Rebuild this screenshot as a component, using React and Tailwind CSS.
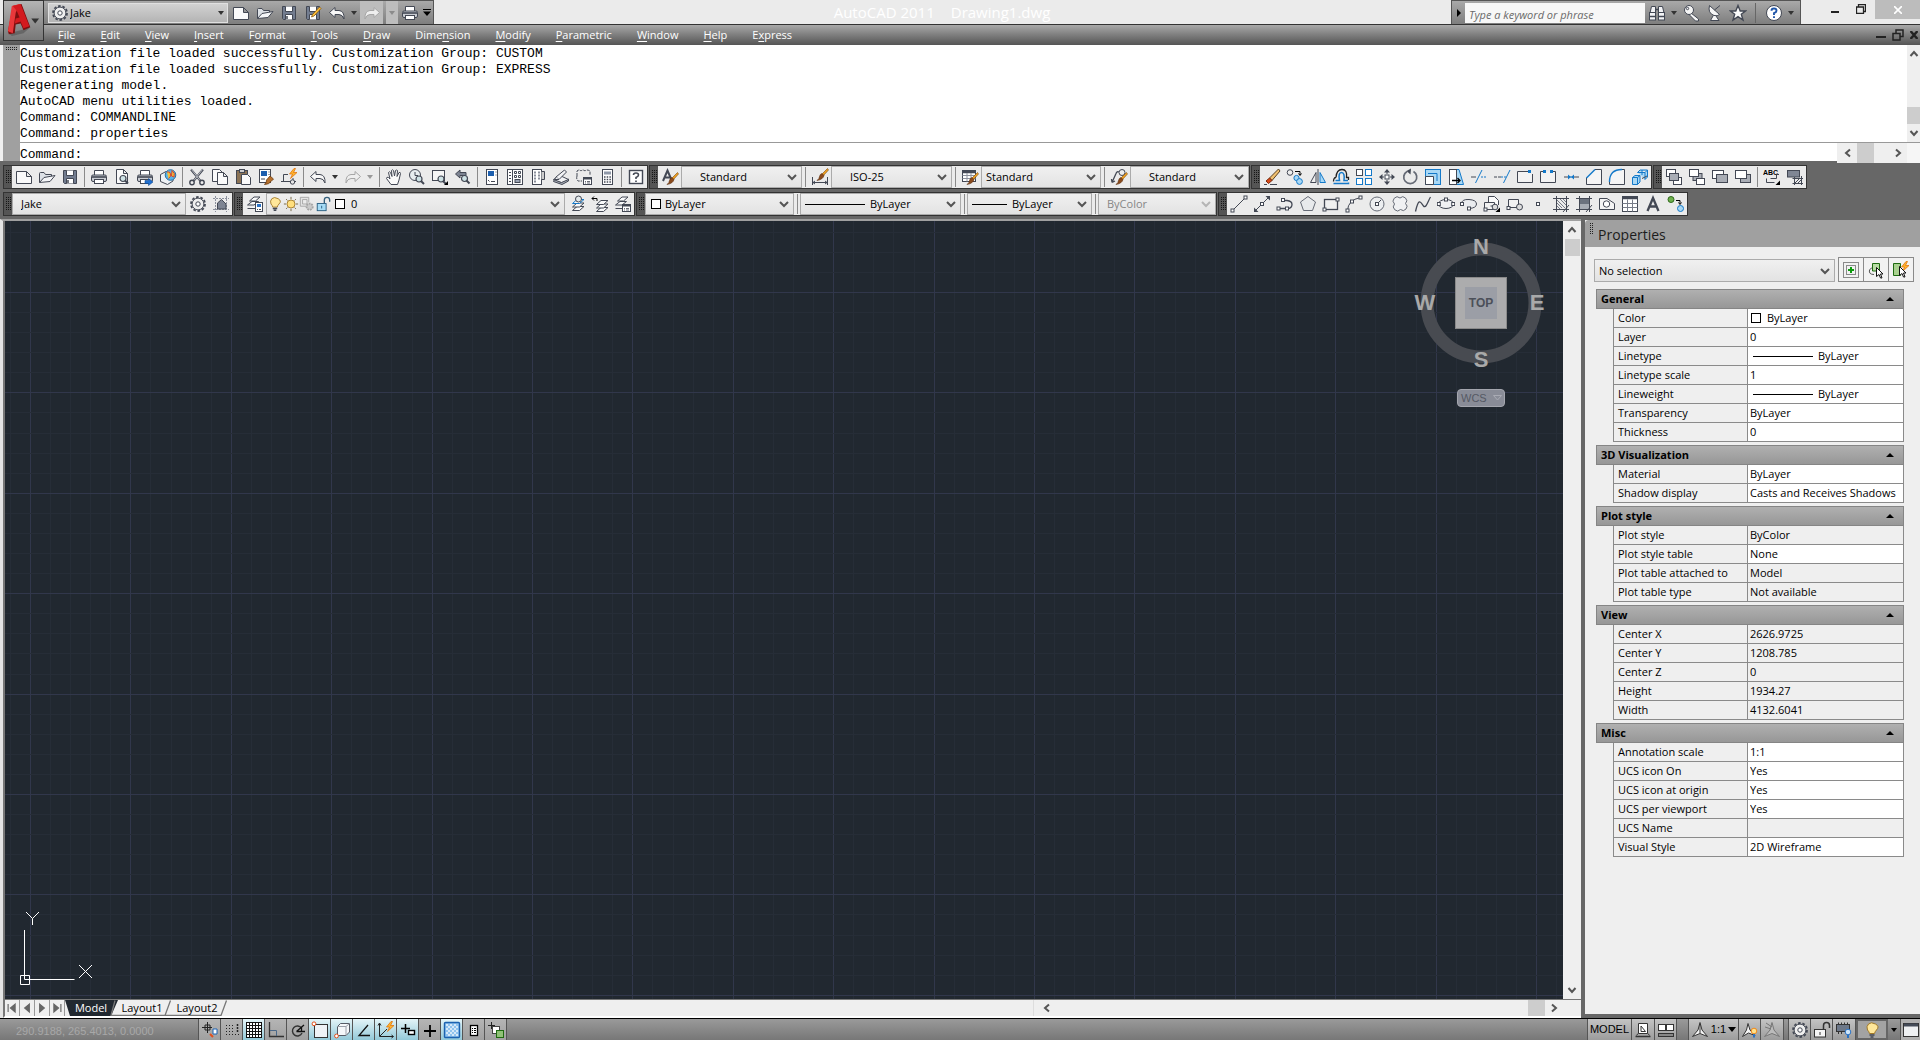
import React from 'react';

const INK = '#434854';
const BLUE = '#1479c9';
const SKY = '#a9d8f5';

/* Small brush laid over style icons */
const brush = (
  <g stroke="none">
    <path d="M16.5 4.5 L17.5 6 L12.5 11.5 L11 10 Z" fill="#f0a020" stroke="#7a4a10" strokeWidth=".6" />
    <path d="M11 9.5 L13 11.5 Q12 15.5 6 16.5 Q8.5 14.5 8.5 12.5 Q9 10 11 9.5Z" fill="#8a4a1c" stroke="#5a2c0c" strokeWidth=".6" />
  </g>
);
const lens = (x, y) => (
  <g>
    <circle cx={x} cy={y} r="3" fill="#cfe3e6" strokeWidth="1.2" />
    <path d={`M${x + 2} ${y + 2}l3 3`} strokeWidth="2" />
  </g>
);
const spark = <path d="M14 .5L9.5 6H12.5L10.5 10.5L17 4.5H13.5L15.5 .5Z" fill="#ffb52e" stroke="#e06a00" strokeWidth=".7" />;
const knob = (x, y) => <rect x={x - 1.5} y={y - 1.5} width="3" height="3" fill="#fff" />;
const layers = (c) => (
  <g fill="#f8f9fa">
    <path d="M4.5 15.5H11.5L16 11.5H9Z" />
    <path d="M4.5 12H11.5L16 8H9Z" />
    <path d="M4.5 8.5H11.5L16 4.5H9Z" stroke={c} />
  </g>
);
const list = (
  <g>
    <rect x="8.5" y="9.5" width="8" height="7" fill="#fff" />
    <path d="M8.5 10.5H16.5" strokeWidth="2" />
    <path d="M10 13.5h1M12 13.5h3M10 15h1M12 15h3" strokeWidth=".8" />
  </g>
);
const gear = (
  <g>
    <circle cx="9" cy="9" r="7" strokeWidth="1.8" strokeDasharray="2.6 1.8" />
    <circle cx="9" cy="9" r="5.9" fill="#efefef" strokeWidth="1" />
    <circle cx="9" cy="9" r="2.2" fill="#fff" />
  </g>
);
const printer = (
  <g>
    <path d="M4.5 7V2.5H13.5V7" fill="#fff" />
    <rect x="1.5" y="7" width="15" height="6.5" rx="1.5" fill="#c9ccd2" />
    <path d="M2 9h14" strokeWidth="1.6" />
    <rect x="4.5" y="11.5" width="9" height="4" fill="#fff" />
  </g>
);
const hatchFrame = <path d="M4.5 1V17M14.5 1V17M1 3.5H17M1 14.5H17" />;
const stackSheets = (
  <g fill="#f8f9fa">
    <path d="M1.5 13.5H9L12 10.5" />
    <path d="M1.5 10H8L12.5 6.500H6Z" />
    <path d="M3.5 6H9.5L14 2H8Z" />
  </g>
);
const chevDown = 'M5 7L9 11L13 7';

const ICONS = {
  new: <path d="M1.5 3.5H11.5L16.5 8.5V15.5H1.5ZM11.5 3.5V8.5H16.5" fill="#fafafa" />,
  open: (
    <g>
      <path d="M1.5 14.5V5.5Q1.5 4.5 2.5 4.5H6L7.5 6.5H13.5V9" fill="#dde1e6" />
      <path d="M1.5 14.5L6 9.5L17 7.5L12 13.5Z" fill="#f4f5f7" />
    </g>
  ),
  save: (
    <g>
      <path d="M2.5 2.5H15.5V15.5H3.5L2.5 14.5Z" fill="#737d90" />
      <path d="M5.5 2.5V7.5H12.5V2.5M5.5 15.5V10.5H12.5V15.5" fill="#fff" />
      <path d="M7 12v3" strokeWidth="1.5" />
    </g>
  ),
  saveas: (
    <g>
      <path d="M2.5 2.5H15.5V15.5H3.5L2.5 14.5Z" fill="#737d90" />
      <path d="M5.5 2.5V7.5H12.5V2.5M5.5 15.5V10.5H12.5V15.5" fill="#fff" />
      <path d="M15.5 3L17 4.5L10 12L7.5 13L8.5 10.5Z" fill="#ffc23c" stroke="#8a5a10" strokeWidth=".8" />
    </g>
  ),
  print: printer,
  preview: (
    <g>
      <path d="M3.5 1.5H10.5L14.5 5.5V15.5H3.5ZM10.5 1.5V5.5H14.5" fill="#fafafa" />
      {lens(10, 10.5)}
    </g>
  ),
  publish: (
    <g>
      {printer}
      <path d="M9 12.5H12.5V10.5L17 14L12.5 17.5V15.5H9Z" fill="#1f6fd0" stroke="#0f4a94" strokeWidth=".6" />
    </g>
  ),
  globe: (
    <g>
      <path d="M1.5 6.5L7 3.5L14 6V13L8.5 16.5L1.5 13.5Z" fill="#eef1f4" />
      <circle cx="11.5" cy="7" r="5.3" fill="#58b4e8" stroke="#2a6fa0" />
      <path d="M8 4Q11 3 11.5 6T9.5 10.5M13 2.5Q16.5 5 15 9L12.5 8Z" fill="#f3c53c" stroke="#d6452c" />
    </g>
  ),
  cut: (
    <g>
      <path d="M3 1.5L12.5 13M15 1.5L5.5 13" strokeWidth="2" />
      <path d="M3.5 1.5L12 12.5M14.5 1.5L6 12.5" stroke="#e9edf2" strokeWidth=".7" />
      <circle cx="4" cy="14.5" r="2.2" fill="#eee" strokeWidth="1.4" />
      <circle cx="14" cy="14.5" r="2.2" fill="#eee" strokeWidth="1.4" />
    </g>
  ),
  copy: (
    <g fill="#fafafa">
      <path d="M1.5 1.5H8.5L11.5 4.5V13.5H1.5Z" />
      <path d="M6.5 4.5H12.5L16.5 8.5V16.5H6.5ZM12.5 4.5V8.5H16.5" />
    </g>
  ),
  paste: (
    <g>
      <rect x="2.5" y="2.5" width="11" height="13" fill="#8b7355" />
      <rect x="5.5" y="1.5" width="5" height="3" fill="#ccc" />
      <path d="M7.5 6.5H13.5L16.5 9.5V16.5H7.5Z" fill="#fafafa" />
    </g>
  ),
  match: (
    <g>
      <rect x="2.5" y="1.5" width="11" height="13" fill="#fff" />
      <rect x="4" y="3" width="6" height="5" fill="#1d5fae" stroke="none" />
      <path d="M11.5 4h1M11.5 6.5h1M4 11h4" />
      <path d="M13 8L16.5 11L14 13.5Q12 16.5 7.5 16.5Q10 14 9.5 12Z" fill="#b5702c" stroke="#6a3a10" strokeWidth=".8" />
    </g>
  ),
  block: (
    <g>
      <path d="M8 6.5H3.5V13.5H13V10" />
      <path d="M1 13.5H16" />
      <circle cx="12.5" cy="14" r="2.2" fill="#e6e6e6" />
      {spark}
    </g>
  ),
  undo: <path d="M1.5 8.5L7 3.5V6.5H11Q16.5 7 16 15Q14.5 10.5 11 10.5H7V13.5Z" fill="#f7f7f7" />,
  redo: <path d="M16.5 8.5L11 3.5V6.5H7Q1.5 7 2 15Q3.5 10.5 7 10.5H11V13.5Z" fill="#eee" stroke="#a6a6a6" />,
  hand: <path d="M6 16.5L1.5 10.5Q1.5 8.5 3.5 9.5L5 11L3.5 4.5Q4.5 3 5.5 4.5L7 8.5L6.5 2.5Q7.5 1 8.5 2.5L9.5 8L10.5 2.5Q11.5 1.5 12.5 2.5L12 8.5L14 4.5Q15.5 4 15.5 5.5L14 12L12.5 16.5Z" fill="#fafafa" />,
  zoomrt: (
    <g>
      <circle cx="7" cy="7" r="5.5" fill="#e7edef" />
      <path d="M7 4V7.5H10" />
      {lens(11, 11)}
    </g>
  ),
  zoomwin: (
    <g>
      <rect x="1.5" y="2.5" width="12" height="10" fill="#f5f5f5" />
      {lens(10, 11)}
      <path d="M17 13V17H13Z" fill="#000" stroke="none" />
    </g>
  ),
  zoomprev: (
    <g>
      <path d="M1.5 6L6 2V4.5H12V7.5H6V10Z" fill="#7d8492" />
      {lens(10.5, 10.5)}
    </g>
  ),
  props: (
    <g>
      <rect x="3.5" y="1.5" width="11" height="15" fill="#fff" />
      <rect x="5" y="3" width="6" height="5" fill="#1d5fae" stroke="none" />
      <path d="M12.5 4h1M12.5 7h1M5 12l1.5 1.5M8 13.5h4" />
    </g>
  ),
  dcenter: (
    <g>
      <rect x="1.5" y="1.5" width="15" height="15" fill="#fff" />
      <path d="M6.5 1.5V16.5M3 4.5h2M3 7.5h2M3 10.5h2M3 13.5h2" />
      <path d="M8.5 3.5h2v2h-2ZM12.5 3.5h2v2h-2ZM8.5 7.5h2v2h-2ZM12.5 7.5h2v2h-2Z" />
      <rect x="9" y="11.5" width="5" height="3" fill="#9aa3b4" />
    </g>
  ),
  palette: (
    <g>
      <rect x="3.5" y="1.5" width="9" height="15" fill="#fff" />
      <path d="M5 4.5h2M9 4.5h2M5 7.5h2M9 7.5h2M5 10.5h2M9 10.5h2M5 13.5h2" strokeWidth="2" stroke="#8b909c" />
      <path d="M12.5 3.5h3v8h-3" fill="#ccc" />
    </g>
  ),
  sheets: (
    <g fill="#f2f3f5">
      <path d="M2.5 11L9 14.500L16.500 11V13L10 16.500L1.500 13.500Z" fill="#aeb3bd" />
      <path d="M1.5 11.500L9 8L16.500 11.500L9.500 14.500Z" />
      <path d="M4 9L12.500 2L14.500 4L7 11.500Z" />
      <path d="M4 9L2.500 11.500L7 11.500" />
    </g>
  ),
  markup: (
    <g>
      <path d="M2 8V3Q4 1 6 3Q8 1 10 3Q12 1 15 3V7M2 8Q1 11 3 13H7" strokeDasharray="3 1" />
      {list}
    </g>
  ),
  calc: (
    <g>
      <rect x="4.5" y="1.5" width="10" height="15" fill="#fff" />
      <rect x="6" y="3.5" width="7" height="3" fill="#8f98a8" stroke="none" />
      <path d="M6 9h7M6 11.5h7M6 14h7" strokeWidth="1.5" strokeDasharray="1.5 1.2" />
    </g>
  ),
  help: (
    <g>
      <rect x="2.5" y="2.5" width="13" height="13" fill="#fff" strokeWidth="1.4" />
      <path d="M6.5 7Q6.5 5 9 5T11.5 7Q11.5 8.5 9 9.5V11M9 12.5V14" strokeWidth="1.6" />
    </g>
  ),
  textstyle: (
    <g>
      <path d="M2 13L6.5 2.5L11 13M3.5 9.5H9.5" strokeWidth="2" />
      {brush}
    </g>
  ),
  dimstyle: (
    <g>
      <path d="M1.5 9V17M16.5 9V17M2 14.5H16M4 13L2 14.5L4 16M14 13L16 14.5L14 16" />
      <g transform="translate(0 -4)">{brush}</g>
    </g>
  ),
  tablestyle: (
    <g>
      <rect x="1.5" y="2.5" width="13" height="11" fill="#fff" />
      <path d="M1.5 4H14.5" strokeWidth="2.5" />
      <path d="M1.5 7.5H14.5M1.5 10.5H14.5M6 5V13.5M10 5V13.5" stroke="#8c919c" />
      {brush}
    </g>
  ),
  leaderstyle: (
    <g>
      <path d="M2 14.5L6 5.5Q7 3 9 4M2 14.5L1.5 11M2 14.5L5 13" strokeWidth="1.3" />
      <circle cx="12" cy="4.5" r="3" fill="#eee" />
      {brush}
    </g>
  ),
  gear,
  wssave: (
    <g>
      <path d="M3.5 1V17M14.5 1V17M1 3.5H17M1 14.5H17" stroke="#8b909c" strokeDasharray="2 1" />
      <path d="M5.5 14V8L9.500 4.500L14 9V14Z" fill="#7d8492" />
    </g>
  ),
  layerprops: (
    <g>
      {stackSheets}
      <rect x="9.5" y="7.5" width="7" height="9" fill="#fff" />
      <rect x="11" y="9" width="4" height="3" fill="#2a72c4" stroke="none" />
      <path d="M11 14.5h1M13 14.5h2" />
    </g>
  ),
  bulb: (
    <g>
      <path d="M6.5 12.5Q6 10.5 4.5 9Q3 5.5 5.5 3T12.5 3T13.5 9Q12 10.5 11.5 12.5Z" fill="#ffe79a" stroke="#a07828" />
      <path d="M6.5 14H11.5M7.5 16H10.5" strokeWidth="1.6" />
    </g>
  ),
  sun: (
    <g>
      <path d="M9 1V3.5M9 14.5V17M1 9H3.5M14.5 9H17M3.5 3.5L5 5M13 13L14.5 14.5M14.5 3.5L13 5M5 13L3.5 14.5" stroke="#6b5c3a" />
      <circle cx="9" cy="9" r="4.500" fill="#ffdf7e" stroke="#a07828" />
    </g>
  ),
  vpfreeze: (
    <g stroke="#a4a4a4">
      <path d="M11 7V1.5H1.5V11.5H8M4 4h5v5H4Z" fill="#e4e4e4" />
      <circle cx="12" cy="12" r="3.5" fill="#c9c9c9" strokeWidth="2" strokeDasharray="2 1" />
    </g>
  ),
  unlock: (
    <g>
      <path d="M10.5 8V4.5Q10.5 1.5 13.5 1.5T16.5 4.5V6.5" strokeWidth="1.5" stroke="#35607c" />
      <rect x="2.5" y="8.5" width="10" height="8" fill="#a6dcf6" stroke="#23597c" />
      <path d="M7.5 11V14" stroke="#23597c" />
    </g>
  ),
  laymcur: (
    <g>
      {layers(BLUE)}
      <circle cx="10.5" cy="4" r="3" fill="#e4eaec" />
    </g>
  ),
  layprev: (
    <g>
      <g transform="translate(1 1)">{layers(INK)}</g>
      <path d="M1 3.5H6V6M3 1.5L1 3.5L3 5.5" stroke="#000" />
    </g>
  ),
  laystate: (
    <g>
      {stackSheets}
      {list}
    </g>
  ),
  erase: (
    <g>
      <path d="M15.5 1L17 3L9 12.5L6.5 10Z" fill="#f0c070" stroke="#5a4020" />
      <path d="M6.5 10L9 12.5L5.5 15.5L3 13Z" fill="#d84818" stroke="#7a2a0c" />
      <path d="M1 16.5H4M7 16.5H14" />
    </g>
  ),
  copyobj: (
    <g>
      <circle cx="4" cy="4.5" r="2.8" fill="#eee" />
      <circle cx="10.5" cy="10" r="2.6" fill={SKY} stroke={BLUE} />
      <circle cx="13.5" cy="13.5" r="2.9" fill={SKY} stroke={BLUE} />
      <path d="M9 3.5H14V7M12.5 5.5L14 7.5L15.5 5.5" stroke="#000" />
    </g>
  ),
  mirror: (
    <g>
      <path d="M9 1V17" />
      <path d="M7 4.5V14.5H1.5Z" fill="#eee" />
      <path d="M11 4.5V14.5H16.5Z" fill={SKY} stroke={BLUE} />
    </g>
  ),
  offset: (
    <g>
      <path d="M4 9.500Q4.500 1.5 10 1.5T14.500 9.500H16.500V12M4 9.500Q1.500 9.500 1.500 13.500" stroke="#222" strokeWidth="1.3" />
      <path d="M1.500 15.500H16.500V14.500M3.500 12.500H7.500Q6 4.500 9.500 4.500T12 12.500H16" stroke={BLUE} strokeWidth="1.5" />
    </g>
  ),
  array: (
    <g stroke={BLUE}>
      <rect x="1.5" y="1.5" width="6" height="6" fill="#fff" stroke={INK} />
      <rect x="10.5" y="1.5" width="6" height="6" fill="#fff" />
      <rect x="1.5" y="10.5" width="6" height="6" fill="#fff" />
      <rect x="10.5" y="10.5" width="6" height="6" fill="#fff" />
    </g>
  ),
  move: (
    <g>
      <rect x="7" y="7" width="4" height="4" fill="#fff" />
      <path d="M9 1L12 4.5H6ZM9 17L12 13.5H6ZM1 9L4.5 6V12ZM17 9L13.5 6V12Z" fill={INK} stroke="none" />
      <path d="M9 4v2M9 12v2M4 9h2M12 9h2" />
    </g>
  ),
  rotate: (
    <g>
      <path d="M6 3.5A6.5 6.5 0 1 0 12.5 3.5" strokeWidth="1.7" stroke="#666b76" />
      <path d="M10 .5L5.5 3L9.5 6.5Z" fill={INK} stroke="none" />
    </g>
  ),
  scale: (
    <g>
      <rect x="1.5" y="1.5" width="15" height="15" fill={SKY} stroke={BLUE} />
      <path d="M1.5 8.5H9.5V16.5H1.5Z" fill="#fff" />
      <path d="M4 5.5H13V13" stroke={BLUE} />
    </g>
  ),
  stretch: (
    <g>
      <path d="M9 1.5H12L16.5 16.5H9Z" fill={SKY} stroke={BLUE} />
      <rect x="2.5" y="1.5" width="7" height="15" fill="#fff" />
      <path d="M5 12.5H13M10.5 10L13 12.5L10.5 15" stroke="#000" strokeWidth="1.3" />
    </g>
  ),
  trim: (
    <g>
      <path d="M1 9H6" />
      <path d="M5.5 15L12 2" stroke={BLUE} />
      <path d="M11 9H17" stroke={BLUE} strokeDasharray="2 1" />
    </g>
  ),
  extend: (
    <g>
      <path d="M1 9H8" strokeDasharray="3 1" />
      <path d="M10.5 15L17 2" stroke={BLUE} />
      <path d="M8 9H13" stroke={BLUE} strokeDasharray="2 1" />
    </g>
  ),
  breakpt: (
    <g>
      <path d="M12 3.5H1.5V14.5H16.5V6" fill="#f3f3f3" />
      <rect x="12" y="2" width="3" height="3" fill={BLUE} stroke="none" />
    </g>
  ),
  break: (
    <g>
      <path d="M4 3.5H1.5V14.5H16.5V3.5H14" fill="#f3f3f3" />
      <path d="M4 2h3v3h-3ZM11 2h3v3h-3Z" fill={BLUE} stroke="none" />
    </g>
  ),
  join: (
    <g>
      <path d="M2 9H7M11 9H17" />
      <path d="M6 6.500L9 9L6 11.500ZM12 6.500L9 9L12 11.500Z" fill={BLUE} stroke="none" />
      <path d="M6 9H12" stroke={BLUE} />
    </g>
  ),
  chamfer: (
    <g>
      <path d="M1.5 9.5V16.5H16.5V1.5H10" fill="#f5f5f5" />
      <path d="M1.5 10L10 1.5" stroke={BLUE} strokeWidth="1.4" />
    </g>
  ),
  fillet: (
    <g>
      <path d="M1.5 13V16.5H16.5V1.5H14" fill="#f5f5f5" />
      <path d="M1.5 14Q1.5 1.5 14 1.5" fill="#f5f5f5" stroke={BLUE} strokeWidth="1.4" />
    </g>
  ),
  explode: (
    <g stroke={BLUE} fill={SKY}>
      <path d="M6.5 4.5L9 2H16.5V9L14 11.5M14 4.5V11.5M6.5 4.5H14L16.5 2M11 2V7" />
      <path d="M1.5 9.5L4 7.5H9V14L6.5 16.5H1.5ZM1.5 9.5H6.5V16.5M6.5 9.5L9 7.5" />
      <path d="M11 10.5L16 8" stroke={INK} />
    </g>
  ),
  order1: (
    <g>
      <rect x="1.5" y="1.5" width="9" height="7" fill="#fff" />
      <rect x="8.5" y="9.5" width="8" height="7" fill="#fff" />
      <rect x="4.5" y="5.5" width="9" height="7" fill="#a9adb5" />
    </g>
  ),
  order2: (
    <g>
      <rect x="5" y="5.5" width="9" height="7" fill="#a9adb5" />
      <rect x="1.5" y="1.5" width="9" height="7" fill="#fff" />
      <rect x="8.5" y="10.5" width="8" height="6" fill="#fff" />
    </g>
  ),
  order3: (
    <g>
      <rect x="1.5" y="2.5" width="11" height="8" fill="#fff" />
      <rect x="5.5" y="6.5" width="11" height="8" fill="#a9adb5" />
    </g>
  ),
  order4: (
    <g>
      <rect x="6.5" y="6.5" width="10" height="8" fill="#a9adb5" />
      <rect x="1.5" y="2.5" width="11" height="8" fill="#fff" />
    </g>
  ),
  ordertext: (
    <g>
      <text x="0" y="7" fontSize="7" fontWeight="bold" fontFamily="Liberation Sans, sans-serif" fill="#000" stroke="none">ABC</text>
      <path d="M3.5 10.5V14.5H11.5M7.5 10.5H13.5V6.5H16" />
      <path d="M17 12.5V17H12.5Z" fill="#000" stroke="none" />
    </g>
  ),
  orderhatch: (
    <g>
      <path d="M8.5 8V17M15.5 8V17M6.5 10.5H17M6.5 15.5H17M9 15L14 10M12 15L15 12" />
      <rect x="1.5" y="2.5" width="12" height="6.5" fill="#7f8694" />
    </g>
  ),
  line: <g><path d="M3 15L15 3" />{knob(2.5, 15.5)}{knob(15.5, 2.5)}</g>,
  xline: (
    <g>
      <path d="M1.5 16.5L16.5 1.5" />
      <path d="M17 1V5.5L12.5 1ZM1 17V12.5L5.5 17Z" fill={INK} stroke="none" />
      {knob(9, 9)}
    </g>
  ),
  pline: <g><path d="M2 13.5H10M7 5.5H11Q16 6 16 9.5T12 13.5" strokeWidth="1.3" />{knob(2.5, 13.5)}{knob(11, 13.5)}{knob(7, 5)}</g>,
  polygon: <path d="M9 1.5L16.5 7L13.5 15.5H4.5L1.5 7Z" fill="#e8eaec" stroke="#666b76" />,
  rect: <g><rect x="2.5" y="4.5" width="13" height="10" fill="#f0f0f0" strokeWidth="1.3" />{knob(2.5, 14.5)}{knob(15.5, 4.5)}</g>,
  arc: <g><path d="M2.5 15.5Q3 5 15.5 2.5" />{knob(2.5, 15.5)}{knob(7, 6.5)}{knob(15.5, 2.5)}</g>,
  circle: <g><circle cx="9" cy="9" r="7" fill="#eceef0" stroke="#666b76" /><path d="M9 9L13 5" />{knob(9, 9)}</g>,
  cloud: <path d="M9 3A3.600 3.600 0 1 1 14.500 8.500A3.800 3.800 0 1 1 9.500 14.500A3.800 3.800 0 1 1 3.500 9A3.600 3.600 0 1 1 9 3Z" fill="#f0f1f3" stroke="#666b76" />,
  spline: <path d="M1.5 16.5C5 1 7 8 9.5 11S14 6 16.5 2" strokeWidth="1.3" />,
  ellipse: <g><ellipse cx="9" cy="9" rx="7.5" ry="4.5" fill="#f0f1f3" />{knob(1.8, 9)}{knob(9, 4.5)}{knob(16.2, 9)}</g>,
  ellarc: <g><path d="M9 13.5Q16.5 13 16.5 9T9 4.5T1.5 9" fill="#e9ebee" />{knob(2, 9)}{knob(9, 13.5)}</g>,
  insert: (
    <g>
      <path d="M5.5 7V1.5H11.5L15.5 5.5V10" fill="#fafafa" />
      <path d="M1.5 7.5H11.5V14.5H1.5ZM7.5 11H13" fill="#f2f2f2" />
      <circle cx="12" cy="12" r="2.8" fill="#ddd" />
      {knob(2.5, 14.5)}
      <path d="M17 12.5V17H12.5Z" fill="#000" stroke="none" />
    </g>
  ),
  makeblock: (
    <g>
      <path d="M2.5 4.5H12.5V12.5H2.5Z" fill="#f2f2f2" />
      <circle cx="13.5" cy="12" r="3" fill="#ddd" />
      {knob(2.5, 13)}
    </g>
  ),
  point: <rect x="7.5" y="7.5" width="3" height="3" fill="#fff" />,
  hatch: <g>{hatchFrame}<path d="M5 8L10 13M5 5L13 13M8 4L14 10M11 4L14 7M5 11L8 14" stroke="#777c88" /><path d="M11 17L17 10" /></g>,
  gradient: <g><rect x="5" y="4" width="9" height="10" fill="#a8adb5" stroke="none" /><rect x="5" y="4" width="9" height="5" fill="#6b727e" stroke="none" />{hatchFrame}<path d="M11 17L17 10" /></g>,
  region: <g><path d="M1.5 3.5H9L16.5 8.5V14.5H1.5Z" fill="#f4f4f4" /><circle cx="8.5" cy="9" r="3.2" fill="#fff" /></g>,
  table: (
    <g>
      <rect x="1.5" y="1.5" width="15" height="15" fill="#fff" />
      <path d="M1.5 3H16.5" strokeWidth="2.5" />
      <path d="M1.5 8.5H16.5M1.5 12.5H16.5M6.5 4.5V16.5M11.5 4.5V16.5" stroke="#777c88" />
    </g>
  ),
  mtext: <path d="M3.500 16L9 3L14.500 16M5.500 11.500H12.500" strokeWidth="2.300" />,
  addsel: (
    <g>
      <circle cx="4" cy="4.5" r="3" fill="#6fb04c" stroke="#2f6a1c" />
      <circle cx="13.5" cy="13.5" r="3" fill={SKY} stroke={BLUE} />
      <path d="M9 5.5H13V8.5M11.5 7.5L13 9.5L14.5 7.5" stroke="#000" />
    </g>
  ),
  binoc: (
    <g fill="#f2f3f5">
      <path d="M2 9L3.5 2.5H7.5V9M16 9L14.5 2.5H10.5V9" />
      <rect x="1.5" y="8.5" width="6" height="7.5" />
      <rect x="10.5" y="8.5" width="6" height="7.5" />
      <path d="M7.5 5.5h3M1.5 12.5h6M10.5 12.5h6" strokeWidth="1.6" />
    </g>
  ),
  key: <g fill="#f5f5f5"><path d="M8 9L15.5 15V17H12.5L6 10.5Z" /><circle cx="6" cy="6" r="4.5" /><circle cx="4.5" cy="4.5" r="1.2" /></g>,
  dish: <g fill="#f5f5f5"><path d="M3.5 1.5Q1.5 9 8 11.5Q11.5 12.5 13.5 10.5ZM8.5 6L14 1.5" /><path d="M7 12L4.5 16.5H13L10 12" /></g>,
  star: <path d="M9 1.5L11.2 7H16.5L12.3 10.3L14 16L9 12.6L4 16L5.7 10.3L1.5 7H6.8Z" fill="#fafafa" strokeWidth="1.4" />,
  helpcircle: (
    <g>
      <circle cx="9" cy="9" r="7.5" fill="#fff" />
      <path d="M6.5 6.7Q6.5 4.5 9 4.5T11.5 6.7Q11.5 8.2 9 9.2V11M9 12.2V14" stroke="#1f55a8" strokeWidth="1.9" />
    </g>
  ),
  snapinfer: <g><path d="M1 6.5H11M6.5 1V12M4 4h5v5h-5Z" stroke="#222" /><path d="M12 8H16V13H12Z" stroke="#1c62b4" fill="#fff" /><path d="M9 13L12 16" stroke="#e2501c" strokeWidth="2" /></g>,
  snap: <g stroke="#222"><path d="M3 4.500H12M3 7.500H12M3 10.500H12M3 13.500H16" strokeDasharray="1 2" /><path d="M14.500 3V12" strokeWidth="1.500" strokeDasharray="2 1" /></g>,
  grid: <g stroke="#111"><rect x="1.5" y="1.5" width="15" height="15" fill="#fff" /><path d="M4.5 1.5V16.5M7.5 1.5V16.5M10.5 1.5V16.5M13.5 1.5V16.5M1.5 4.5H16.5M1.5 7.5H16.5M1.5 10.5H16.5M1.5 13.5H16.5" /></g>,
  ortho: <g><path d="M2.5 1V15.5H17" stroke="#333" strokeWidth="1.3" /><path d="M3 9.5H9.5V15" stroke="#4b6888" /></g>,
  polar: <g stroke="#333"><path d="M12.500 7A5 5 0 1 0 13 12" strokeWidth="1.400" /><path d="M7.500 10.500L15 4M7.500 10.500H16M12.500 6V10.500" stroke="#111" strokeWidth="1.3" /></g>,
  osnap: <g><rect x="3.5" y="3.5" width="13" height="13" fill="#eef2f6" stroke="#333" /><circle cx="3" cy="2.8" r="1.9" fill="#fff" stroke="#e2501c" /></g>,
  osnap3d: <g><path d="M4.5 5.5L7.5 2.5H16.5V11L13 14.5H4.5Z" fill="#f4f7fa" stroke="#555b66" /><path d="M4.500 5.500H13V14.500M13 5.500L16.500 2.500" stroke="#9aa0aa" /><circle cx="3.5" cy="15" r="1.9" fill="#fff" stroke="#e2501c" /></g>,
  otrack: <path d="M13 4L4 14.5H15" stroke="#111" strokeWidth="1.3" />,
  ducs: <g><path d="M2.5 3V15.5H16M3 15L10 8M1 4.5L2.5 2L4 4.5M14.5 14L16.5 15.5L14.5 17" stroke="#222" />{spark}</g>,
  dyn: <g stroke="#000"><path d="M2 7.5H11M6.5 3V12" strokeWidth="1.5" /><rect x="9.5" y="9.5" width="6" height="4" fill="#fff" strokeWidth="1.4" /></g>,
  lwt: <path d="M3 10H15M9 4V16" stroke="#000" strokeWidth="1.8" />,
  transp: (
    <g>
      <rect x="1.5" y="1.5" width="15" height="15" rx="1" fill="#8fc3ee" stroke="#1b62b0" strokeWidth="1.4" />
      <path d="M3 4H15M3 8H15M3 12H15" stroke="#d4e8f8" strokeWidth="2" strokeDasharray="2 2" />
      <path d="M5 6H15M5 10H15M5 14H15" stroke="#d4e8f8" strokeWidth="2" strokeDasharray="2 2" />
    </g>
  ),
  qp: <g stroke="#000"><rect x="5.5" y="4.5" width="7" height="10" fill="#fff" strokeWidth="1.3" /><path d="M7 7.5h1M9 7.5h2M7 9.5h1M9 9.5h2M7 11.5h1M9 11.5h2" /></g>,
  selcyc: <g><path d="M1 4.5H8M4.5 1V8" stroke="#222" /><rect x="5.5" y="5.5" width="7" height="7" fill="#fff" stroke="#444" /><rect x="9.5" y="9.5" width="7" height="7" fill="#8fc276" stroke="#1e6a10" /></g>,
  paper: <g><path d="M4.5 2.5H13.5V12.5H4.5Z" fill="#fff" stroke="#333" /><path d="M7 5V10.5H11.5Z" stroke="#333" /><path d="M1.5 15.5H16.5" stroke="#333" strokeWidth="1.5" /><path d="M2.5 14.5L4 12.5M15.5 14.5L14 12.5" stroke="#333" /></g>,
  views: <g stroke="#333"><rect x="1.5" y="3.5" width="7" height="6" fill="#fff" /><rect x="9.5" y="3.5" width="7" height="6" fill="#fff" /><rect x="1.5" y="12.5" width="15" height="3" fill="#888" /></g>,
  anno: <path d="M9 1.5L11 9L16.5 15.5L9 12.5L1.5 15.5L7 9ZM9 3V12" fill="#f5f5f5" stroke="#333" />,
  annovis: <g><path d="M7 2.5L9 9L14 14.5L7.5 12L1.5 15.5L5.5 9Z" fill="#f5f5f5" stroke="#333" /><circle cx="13" cy="10" r="2.8" fill="#ffe08a" stroke="#f08a1c" /><path d="M13 13v3.5" strokeWidth="2" stroke="#2a72c4" /></g>,
  annoauto: <path d="M9 1.5L11 9L16.5 15.5L9 12.5L1.5 15.5L7 9ZM3 2L9 6M2 6L8 8" fill="#bbb" stroke="#777" />,
  lockui: <g><path d="M10.5 8V4.5Q10.5 1.5 13.5 1.5T16.5 4.5V7" stroke="#333" strokeWidth="1.5" /><rect x="1.5" y="8.5" width="11" height="7.5" fill="#f5f5f5" stroke="#333" /><path d="M7 11V14" stroke="#333" /></g>,
  hw: <g><rect x="1.5" y="3.5" width="13" height="7" fill="#6d7889" stroke="#333" /><path d="M3.5 1.5V3M6.5 1.5V3M9.5 1.5V3M12.5 1.5V3M3.5 11V13M6.5 11V13" stroke="#333" /><circle cx="13" cy="11" r="2.8" fill="#cfe6fa" stroke="#2a72c4" /><path d="M13 14v3" stroke="#2a72c4" strokeWidth="2" /></g>,
  clean: <g><rect x="1.5" y="2.5" width="15" height="13" fill="#eef0f2" stroke="#333" /><path d="M2 4H16" strokeWidth="3" stroke="#444b58" /></g>,
  qselplus: <g><rect x="1.5" y="1.5" width="15" height="15" stroke="#222" strokeDasharray="1 1" /><rect x="4.5" y="4.5" width="9" height="9" stroke="#222" strokeDasharray="1 1" /><path d="M9 6V12M6 9H12" stroke="#0c9a0c" strokeWidth="2" /></g>,
  selobj: <g><path d="M7 13.5Q1.5 13.5 2.5 9Q4 6 7 7" stroke="#555" /><path d="M5.5 2.5H12.5V10H5.5Z" fill="#b8dca4" stroke="#1e6a10" /><path d="M9.5 6.5V15.5L12 13.5L13.5 17H15L13.5 13H16Z" fill="#fff" stroke="#111" /></g>,
  qsel: <g><path d="M1.5 2.5H8.5V14.5H1.5Z" fill="#a9d18f" stroke="#1e6a10" />{spark}<path d="M7.5 5.5V14.5L10 12.5L11.5 16H13L11.5 12H14Z" fill="#fff" stroke="#111" /></g>,
};

const Icon = ({ name, size = 'size-[18px]' }) => (
  <svg viewBox="0 0 18 18" className={`shrink-0 ${size}`} fill="none" stroke={INK} aria-hidden="true">
    {ICONS[name]}
  </svg>
);

const Tool = ({ name }) => (
  <button type="button" aria-label={name} className="flex h-full w-[23px] shrink-0 items-center justify-center">
    <Icon name={name} />
  </button>
);

const Caret = ({ color = '#333', label = 'more' }) => (
  <button type="button" aria-label={label} className="flex h-full w-3 shrink-0 items-center justify-center">
    <svg viewBox="0 0 6 4" className="h-1 w-1.5" aria-hidden="true">
      <path d="M0 0H6L3 4Z" fill={color} />
    </svg>
  </button>
);

const Sep = () => (
  <div className="flex w-1.5 shrink-0 justify-center py-px">
    <div className="w-px bg-[#8a8a8a]" />
  </div>
);

const Grip = () => (
  <div className="flex w-2 shrink-0 justify-center bg-[#555] py-1">
    <div className="w-[6px] bg-[conic-gradient(#161616_25%,transparent_0)] bg-[length:2px_2px]" />
  </div>
);

const Bar = ({ children }) => (
  <div className="flex h-6 shrink-0 border border-[#333] bg-[#ebebeb]">
    <Grip />
    {children}
  </div>
);

const Chevron = ({ className = '', d = chevDown, color = '#555' }) => (
  <svg viewBox="0 0 18 18" className={`size-[18px] ${className}`} fill="none" stroke={color} strokeWidth="2" aria-hidden="true">
    <path d={d} />
  </svg>
);

const Combo = ({ value, label, width, pad = 'pl-2', disabled, children }) => (
  <div className={`relative flex h-full shrink-0 items-center border border-[#ababab] bg-gradient-to-b from-[#f0f0f0] to-[#e3e3e3] ${width}`}>
    <select aria-label={label} disabled={disabled} className={`h-full w-full appearance-none bg-transparent leading-5 text-black disabled:text-[#868686] ${pad}`}>
      <option>{value}</option>
    </select>
    {children && <div className="pointer-events-none absolute inset-y-0 left-0 flex items-center">{children}</div>}
    <Chevron className="pointer-events-none absolute right-0 top-px" color={disabled ? '#b5b5b5' : '#555'} />
  </div>
);

const Names = ({ items }) => items.map((n, i) => (n === '|' ? <Sep key={i} /> : <Tool key={i} name={n} />));

const MENUS = [
  ['', 'F', 'ile'], ['', 'E', 'dit'], ['', 'V', 'iew'], ['', 'I', 'nsert'], ['F', 'o', 'rmat'], ['', 'T', 'ools'], ['', 'D', 'raw'],
  ['Dime', 'n', 'sion'], ['', 'M', 'odify'], ['', 'P', 'arametric'], ['', 'W', 'indow'], ['', 'H', 'elp'], ['E', 'x', 'press'],
];

function Header() {
  return (
    <header className="relative shrink-0">
      <div className="flex h-6 justify-between bg-[#ebebeb]">
        <div className="ml-11 flex w-[390px] items-center border-t border-r border-[#555] bg-gradient-to-b from-[#a9a9a9] to-[#7e7e7e] pl-1">
          <div className="relative mr-px flex h-5 w-[180px] shrink-0 items-center border border-[#e0e0e0] bg-gradient-to-b from-[#d2d2d2] to-[#b4b4b4]">
            <select aria-label="Workspace" className="h-full w-full appearance-none pl-[21px] leading-4 text-black">
              <option>Jake</option>
            </select>
            <div className="pointer-events-none absolute inset-y-0 left-0.5 flex items-center"><Icon name="gear" /></div>
            <div className="pointer-events-none absolute inset-y-0 right-0 flex items-center"><Caret label="Open workspaces" /></div>
          </div>
          <div className="flex h-full items-center gap-px">
            <Tool name="new" /><Tool name="open" /><Tool name="save" /><Tool name="saveas" /><Tool name="undo" />
          </div>
          <Caret />
          <div className="flex h-full bg-[#bdbdbd]"><Tool name="redo" /></div>
          <div className="ml-[3px] flex h-full bg-[#bdbdbd]"><Caret color="#8b8b8b" /></div>
          <Tool name="print" />
          <button type="button" aria-label="Customize" className="flex h-full w-3 items-center justify-center">
            <svg viewBox="0 0 8 7" className="h-[7px] w-2"><path d="M0 0H8V1H0ZM0 2.5H8L4 7Z" fill="#000" /></svg>
          </button>
        </div>
        <div className="flex">
          <div className="mr-[30px] flex w-[350px] items-center border-x border-t border-[#555] bg-gradient-to-b from-[#a9a9a9] to-[#7e7e7e]">
            <button type="button" aria-label="Collapse" className="flex w-[13px] justify-center">
              <svg viewBox="0 0 4 8" className="h-2 w-1"><path d="M0 0L4 4L0 8Z" fill="#000" /></svg>
            </button>
            <input aria-label="Search" placeholder="Type a keyword or phrase" className="h-5 w-[180px] bg-[#f7f7f7] pl-1 pt-1 italic placeholder:text-[#6a6a6a]" />
            <Tool name="binoc" /><Caret />
            <Tool name="key" /><Tool name="dish" /><Tool name="star" />
            <div className="mx-1.5 h-5 w-px bg-[#666]" />
            <Tool name="helpcircle" /><Caret />
          </div>
          <button type="button" aria-label="Minimize" className="flex w-[25px] pt-[11px]"><span className="h-0.5 w-2 bg-[#222]" /></button>
          <button type="button" aria-label="Restore" className="flex w-[19px] pt-1">
            <svg viewBox="0 0 10 10" className="size-2.5" fill="none" stroke="#222"><path d="M2.5 2.5V.5H9.5V7.5H7.5M.5 3H7.5V9.5H.5Z" strokeWidth="1.3" /></svg>
          </button>
          <button type="button" aria-label="Close" className="flex h-[19px] w-[45px] items-center justify-center bg-[#bcbcbc]">
            <svg viewBox="0 0 8 8" className="size-2" stroke="#fff" strokeWidth="1.6"><path d="M0 0L8 8M8 0L0 8" /></svg>
          </button>
        </div>
      </div>
      <h1 className="pointer-events-none absolute inset-x-0 top-0 flex h-6 items-center justify-center gap-4 pr-9 pt-px text-[15px] text-white">
        <span>AutoCAD 2011</span><span>Drawing1.dwg</span>
      </h1>
      <nav className="flex h-[21px] items-center gap-[25px] border-t border-[#333] bg-gradient-to-b from-[#a9a9a9] to-[#555] pl-[58px] text-white">
        {MENUS.map(([a, b, c]) => (
          <a key={a + b + c} href="#" className="leading-4">{a}<span className="underline underline-offset-2">{b}</span>{c}</a>
        ))}
        <div className="ml-auto flex items-center gap-1.5 pr-0.5">
          <button type="button" aria-label="Minimize drawing" className="mt-1 h-0.5 w-2.5 bg-[#222]" />
          <button type="button" aria-label="Restore drawing">
            <svg viewBox="0 0 12 12" className="size-3" fill="none" stroke="#222" strokeWidth="1.5"><path d="M4 4V1H11V7.5H8M1 4.5H8V11H1Z" /></svg>
          </button>
          <button type="button" aria-label="Close drawing">
            <svg viewBox="0 0 8 8" className="size-2" stroke="#222" strokeWidth="2.4"><path d="M.5 0L7.5 8M7.5 0L.5 8" /></svg>
          </button>
        </div>
      </nav>
      <button type="button" aria-label="Application menu" className="absolute left-[3px] top-0 flex h-[41px] w-[41px] items-center border border-[#333] bg-gradient-to-b from-[#b4b4b4] to-[#777]">
        <svg viewBox="0 0 40 40" className="size-[39px]">
          <path d="M5 33L17 30L27 27L20 33L8 36Z" fill="#4a4a4a" opacity=".5" />
          <path d="M9 5L18 3L27 27L20 30L17 23L12 24L11 33L5 34L4 31Z" fill="#7d0f10" />
          <path d="M4 31L8 5L16 3L12 12L9 33Z" fill="#e8383b" />
          <path d="M9 5L17 3L26 26L20 28L17 21L11 23L12 18L16 17L13 10Z" fill="#d31a1f" />
          <path d="M28 18H36L32 23Z" fill="#333" />
        </svg>
      </button>
    </header>
  );
}

const LOG = [
  'Customization file loaded successfully. Customization Group: CUSTOM',
  'Customization file loaded successfully. Customization Group: EXPRESS',
  'Regenerating model.',
  'AutoCAD menu utilities loaded.',
  'Command: COMMANDLINE',
  'Command: properties',
];

const UP = 'M5.5 11L9 7L12.5 11';
const DOWN = 'M5.5 7L9 11L12.5 7';
const LEFT = 'M11 5.5L7 9L11 12.5';
const RIGHT = 'M7 5.5L11 9L7 12.5';

function CommandWindow() {
  return (
    <section aria-label="Command window" className="flex h-[116px] shrink-0 border-l-[3px] border-[#f0f0f0] bg-white font-['Liberation_Mono',monospace] text-[13px] leading-4 text-black">
      <div className="w-[17px] shrink-0 bg-[#a0a0a0] pl-0.5 pt-0.5">
        <div className="h-1 w-3 bg-[conic-gradient(#222_25%,transparent_0)] bg-[length:2px_2px]" />
      </div>
      <div className="flex min-w-0 flex-1 flex-col">
        <div className="flex h-[97px]">
          <div className="flex-1 whitespace-pre pt-px">{LOG.map((l) => <p key={l}>{l}</p>)}</div>
          <div className="flex w-[13px] flex-col items-center justify-between overflow-hidden bg-[#efefef]">
            <Chevron d={UP} className="shrink-0" />
            <div className="mt-auto h-[17px] w-full bg-[#cdcdcd]" />
            <Chevron d={DOWN} className="shrink-0" />
          </div>
        </div>
        <div className="flex flex-1 border-t border-[#999]">
          <label className="flex flex-1 items-center pt-1">
            <span>Command:</span>
            <input aria-label="Command" className="min-w-0 flex-1" />
          </label>
          <div className="flex w-[70px] items-center bg-[#efefef]">
            <Chevron d={LEFT} className="ml-0.5" />
            <div className="h-full w-[17px] bg-[#cdcdcd]" />
            <Chevron d={RIGHT} className="ml-auto" />
          </div>
          <div className="w-[13px] bg-[#f6f6f6]" />
        </div>
      </div>
    </section>
  );
}

function Toolbars() {
  return (
    <div className="flex shrink-0 flex-col gap-[3px] pb-[3px] pl-[3px] pt-1">
      <div className="flex gap-px">
        <Bar>
          <Names items={['new', 'open', 'save', '|', 'print', 'preview', 'publish', 'globe', '|', 'cut', 'copy', 'paste', 'match', 'block', '|', 'undo']} />
          <Caret />
          <Tool name="redo" />
          <Caret color="#999" />
          <Names items={['|', 'hand', 'zoomrt', 'zoomwin', 'zoomprev', '|', 'props', 'dcenter', 'palette', 'sheets', 'markup', 'calc', '|', 'help']} />
        </Bar>
        <Bar>
          <Tool name="textstyle" /><Combo label="Text style" value="Standard" width="w-[121px]" pad="pl-[18px]" /><Sep />
          <Tool name="dimstyle" /><Combo label="Dimension style" value="ISO-25" width="w-[121px]" pad="pl-[18px]" /><Sep />
          <Tool name="tablestyle" /><Combo label="Table style" value="Standard" width="w-[120px]" pad="pl-1" /><Sep />
          <Tool name="leaderstyle" /><Combo label="Multileader style" value="Standard" width="w-[119px]" pad="pl-[18px]" />
        </Bar>
        <Bar>
          <Names items={['erase', 'copyobj', 'mirror', 'offset', 'array', 'move', 'rotate', 'scale', 'stretch', 'trim', 'extend', 'breakpt', 'break', 'join', 'chamfer', 'fillet', 'explode']} />
        </Bar>
        <Bar>
          <Names items={['order1', 'order2', 'order3', 'order4', '|', 'ordertext', 'orderhatch']} />
        </Bar>
      </div>
      <div className="flex gap-px">
        <Bar>
          <Combo label="Workspace" value="Jake" width="w-[174px]" />
          <Tool name="gear" /><Tool name="wssave" />
        </Bar>
        <Bar>
          <Tool name="layerprops" />
          <Combo label="Layer" value="0" width="w-[299px]" pad="pl-[84px]">
            <Icon name="bulb" size="size-4" /><Icon name="sun" size="size-4" /><Icon name="vpfreeze" size="size-4" /><Icon name="unlock" size="size-4" />
            <svg viewBox="0 0 10 10" className="ml-1 size-2.5"><rect x=".5" y=".5" width="9" height="9" fill="#fff" stroke="#000" /></svg>
          </Combo>
          <Tool name="laymcur" /><Tool name="layprev" /><Tool name="laystate" />
        </Bar>
        <Bar>
          <Combo label="Color" value="ByLayer" width="w-[149px]" pad="pl-[19px]">
            <svg viewBox="0 0 10 10" className="ml-[5px] size-2.5"><rect x=".5" y=".5" width="9" height="9" fill="#fff" stroke="#000" /></svg>
          </Combo>
          <Sep />
          <Combo label="Linetype" value="ByLayer" width="w-[161px]" pad="pl-[69px]"><div className="ml-1 h-px w-[60px] bg-black" /></Combo>
          <Sep />
          <Combo label="Lineweight" value="ByLayer" width="w-[125px]" pad="pl-11"><div className="ml-1 h-px w-[35px] bg-black" /></Combo>
          <Sep />
          <Combo label="Plot style" value="ByColor" width="w-[118px]" disabled />
        </Bar>
        <Bar>
          <Names items={['line', 'xline', 'pline', 'polygon', 'rect', 'arc', 'circle', 'cloud', 'spline', 'ellipse', 'ellarc', 'insert', 'makeblock', 'point', 'hatch', 'gradient', 'region', 'table', 'mtext', 'addsel']} />
        </Bar>
      </div>
    </div>
  );
}

/* Background grid: five minor cells to each major one */
const STEP = 20.08;
const gridLines = (origin, max) => {
  const out = [];
  for (let i = Math.ceil(-origin / STEP); origin + i * STEP < max; i += 1) out.push([Math.round(origin + i * STEP) + 0.5, i % 5 === 0]);
  return out.sort((a, b) => a[1] - b[1]);
};
const COLS = gridLines(25, 3840);
const ROWS = gridLines(71, 2160);

function Canvas() {
  return (
    <div className="relative min-w-0 flex-1 overflow-hidden bg-[#212830]">
      <svg className="absolute inset-0 h-full w-full" aria-hidden="true">
        {COLS.map(([x, major]) => <path key={x} d={`M${x} 0V2160`} stroke={major ? '#31374b' : '#262d37'} />)}
        {ROWS.map(([y, major]) => <path key={y} d={`M0 ${y}H3840`} stroke={major ? '#31374b' : '#262d37'} />)}
      </svg>
      <svg viewBox="0 0 80 80" className="absolute bottom-[12px] left-[12px] size-20" fill="none" stroke="#fff" aria-label="UCS icon">
        <path d="M7.5 23V68.5M7.5 72.5H57.5M3.5 68.5H12.5V77.5H3.5ZM7.5 68V72.5" />
        <path d="M9 5L15.5 11.5V18M22 5L15.5 11.5M62 58L75 71M75 58L62 71" />
      </svg>
      <svg viewBox="0 0 136 136" className="absolute right-[14px] top-[14px] size-[136px]" aria-label="View cube">
        <circle cx="68" cy="68" r="54" fill="none" stroke="#484b51" strokeWidth="13" />
        <rect x="42.5" y="42.5" width="51" height="51" fill="#acacad" stroke="#8a8a8a" />
        <rect x="52" y="52" width="32" height="32" fill="#9b9ea6" />
        <g fontFamily="Liberation Sans, sans-serif" fontWeight="bold" textAnchor="middle" fill="#a9a9a9">
          <text x="68" y="19" fontSize="22">N</text>
          <text x="68" y="132" fontSize="22">S</text>
          <text x="12" y="75" fontSize="22">W</text>
          <text x="124" y="75" fontSize="22">E</text>
          <text x="68" y="72" fontSize="12" fill="#4c5059">TOP</text>
        </g>
      </svg>
      <button type="button" className="absolute right-[58px] top-[168px] flex h-[18px] w-12 items-center gap-1.5 rounded border border-[#a4a6ae] bg-[#898c97] pl-[3px] font-['Liberation_Sans',sans-serif] text-[11px] text-[#555964]">
        WCS
        <svg viewBox="0 0 9 6" className="h-1.5 w-[9px]" fill="none" stroke="#a9abb4"><path d="M.5 .5H8.5L4.5 5Z" /></svg>
      </button>
    </div>
  );
}

const NAVS = ['M4 4V14M13 4L7 9L13 14Z', 'M12 4L6 9L12 14Z', 'M6 4L12 9L6 14Z', 'M14 4V14M5 4L11 9L5 14Z'];

function LayoutTabs() {
  return (
    <div className="flex h-[17px] shrink-0 border-t border-[#777] bg-[#efefef]">
      {NAVS.map((d) => (
        <button key={d} type="button" aria-label="Scroll tabs" className="flex w-[15px] items-center justify-center border-r border-[#999]">
          <svg viewBox="0 0 18 18" className="size-3.5" fill="#666" stroke="#666" strokeWidth="1.5"><path d={d} /></svg>
        </button>
      ))}
      <div className="relative flex w-[163px] items-center">
        <svg viewBox="0 0 163 16" className="absolute inset-0 h-4 w-[163px]" aria-hidden="true">
          <path d="M0 0H53L46 16H5Z" fill="#212830" />
          <path d="M50 .5L46 15.5H100L105.5 .5M100 15.500H156L161.5 .5" fill="none" stroke="#777" strokeWidth="1.3" />
        </svg>
        <button type="button" className="relative w-[52px] text-center text-white">Model</button>
        <button type="button" className="relative w-[50px] text-center">Layout1</button>
        <button type="button" className="relative w-[60px] text-center">Layout2</button>
      </div>
      <div className="ml-auto mr-[18px] flex w-[530px] items-center border-l border-[#ddd]">
        <Chevron d={LEFT} className="ml-1" />
        <div className="ml-auto h-full w-[17px] bg-[#cdcdcd]" />
        <Chevron d={RIGHT} />
      </div>
    </div>
  );
}

const SECTIONS = [
  ['General', [['Color', 'ByLayer', 'swatch'], ['Layer', '0'], ['Linetype', 'ByLayer', 'line'], ['Linetype scale', '1'], ['Lineweight', 'ByLayer', 'line'], ['Transparency', 'ByLayer'], ['Thickness', '0']]],
  ['3D Visualization', [['Material', 'ByLayer'], ['Shadow display', 'Casts and Receives Shadows']]],
  ['Plot style', [['Plot style', 'ByColor', 'ro'], ['Plot style table', 'None'], ['Plot table attached to', 'Model', 'ro'], ['Plot table type', 'Not available', 'ro']]],
  ['View', [['Center X', '2626.9725', 'ro'], ['Center Y', '1208.785', 'ro'], ['Center Z', '0', 'ro'], ['Height', '1934.27', 'ro'], ['Width', '4132.6041', 'ro']]],
  ['Misc', [['Annotation scale', '1:1'], ['UCS icon On', 'Yes'], ['UCS icon at origin', 'Yes'], ['UCS per viewport', 'Yes'], ['UCS Name', '', 'ro'], ['Visual Style', '2D Wireframe']]],
];

function Properties() {
  return (
    <aside className="mb-1 ml-1 mt-px flex w-[335px] shrink-0 flex-col bg-[#efefef]">
      <div className="flex h-[27px] gap-1 rounded-tl bg-[#a0a0a0] pl-1 pt-[3px]">
        <div className="h-3 w-[5px] bg-[conic-gradient(#222_25%,transparent_0)] bg-[length:2px_2px]" />
        <h2 className="pt-0.5 text-[14px] leading-5 text-[#1c1c1c]">Properties</h2>
      </div>
      <div className="flex pl-[9px] pt-2.5">
        <div className="relative mr-[3px] mt-0.5 h-[23px] w-[241px] border border-[#ababab] bg-gradient-to-b from-[#f0f0f0] to-[#e3e3e3]">
          <select aria-label="Selection" className="h-full w-full appearance-none pl-1 leading-5"><option>No selection</option></select>
          <Chevron className="pointer-events-none absolute right-0 top-0.5" />
        </div>
        {['qselplus', 'selobj', 'qsel'].map((n) => (
          <button key={n} type="button" aria-label={n} className="-ml-px flex h-[25px] w-[26px] items-center justify-center border border-[#8a8a8a] bg-[#f2f2f2] first-of-type:ml-0"><Icon name={n} /></button>
        ))}
      </div>
      <div className="flex flex-col gap-[3px] pl-[11px] pr-4 pt-[7px]">
        {SECTIONS.map(([title, rows]) => (
          <section key={title}>
            <button type="button" className="flex h-5 w-full items-center justify-between border border-[#858585] bg-gradient-to-b from-[#b0b0b0] to-[#979797] pl-1 pr-[9px] font-bold">
              {title}
              <svg viewBox="0 0 8 4" className="h-1 w-2"><path d="M0 4L4 0L8 4Z" fill="#000" /></svg>
            </button>
            <table className="ml-[17px] w-[291px] table-fixed border-separate border-spacing-0 border-l border-[#8a8a8a]">
              <tbody>
                {rows.map(([label, value, kind]) => (
                  <tr key={label} className="h-[19px]">
                    <th scope="row" className="w-[134px] border-b border-r border-[#8a8a8a] p-0 pl-1 text-left font-normal leading-[18px]">{label}</th>
                    <td className={`border-b border-r border-[#8a8a8a] p-0 pl-0.5 leading-[18px] ${kind === 'ro' ? '' : 'bg-white'}`}>
                      <div className="flex h-[18px] items-center">
                        {kind === 'swatch' && <span className="ml-px mr-1.5 size-2.5 border border-black" />}
                        {kind === 'line' && <span className="ml-[3px] mr-[5px] h-px w-[60px] bg-black" />}
                        {kind === 'ro' ? value : <input aria-label={label} defaultValue={value} className="h-[18px] w-0 flex-1" />}
                      </div>
                    </td>
                  </tr>
                ))}
              </tbody>
            </table>
          </section>
        ))}
      </div>
    </aside>
  );
}

const TOGGLES = [
  ['snapinfer'], ['snap'], ['grid', 1], ['ortho'], ['polar'], ['osnap', 1], ['osnap3d', 1], ['otrack', 1], ['ducs', 1], ['dyn', 1], ['lwt'], ['transp', 1], ['qp'], ['selcyc'],
];

const StatusBtn = ({ name, className = 'w-[22px]', children }) => (
  <button type="button" aria-label={name} className={`flex h-full shrink-0 items-center justify-center border-r border-[#555] bg-gradient-to-b from-[#c4c4c4] to-[#9c9c9c] ${className}`}>
    {children || <Icon name={name} />}
  </button>
);

function StatusBar() {
  return (
    <footer className="flex h-[22px] shrink-0 items-stretch border-t border-black bg-gradient-to-b from-[#9a9a9a] to-[#777]">
      <output className="w-[199px] shrink-0 border-r border-[#555] pl-4 pt-0.5 font-['Liberation_Sans',sans-serif] text-[11px] leading-5 text-[#a8a8a8]">290.9188, 265.4013, 0.0000</output>
      {TOGGLES.map(([n, on]) => (
        <button
          key={n}
          type="button"
          aria-label={n}
          aria-pressed={!!on}
          className="flex w-[22px] shrink-0 items-center justify-center border-r border-[#555] bg-gradient-to-b from-[#b5b5b5] to-[#a0a0a0] aria-pressed:from-[#e3f4f8] aria-pressed:to-[#93c9d8]"
        >
          <Icon name={n} />
        </button>
      ))}
      <div className="ml-auto flex">
        <StatusBtn name="Model space" className="w-[45px] border-l font-['Liberation_Sans',sans-serif] text-[11px]">MODEL</StatusBtn>
        <StatusBtn name="paper" className="w-[23px]" />
        <StatusBtn name="views" />
        <div className="w-3 border-r border-[#555]" />
        <StatusBtn name="Annotation scale" className="w-[50px] gap-0.5 font-['Liberation_Sans',sans-serif] text-[11px]">
          <Icon name="anno" />1:1
          <svg viewBox="0 0 8 5" className="h-[5px] w-2"><path d="M0 0H8L4 5Z" fill="#000" /></svg>
        </StatusBtn>
        <StatusBtn name="annovis" /><StatusBtn name="annoauto" className="w-[23px]" />
        <div className="w-[5px] border-r border-[#555]" />
        <StatusBtn name="gear" /><StatusBtn name="lockui" /><StatusBtn name="hw" className="w-[23px]" />
        <button type="button" aria-label="Isolate objects" className="flex w-8 items-center justify-center border-2 border-[#666] bg-[#a3a3a3]"><Icon name="bulb" /></button>
        <Caret color="#000" label="Status bar menu" />
        <button type="button" aria-label="Clean screen" className="flex w-5 items-center justify-center border-l border-[#555] bg-[#b0b0b0]"><Icon name="clean" /></button>
      </div>
    </footer>
  );
}

export default function App() {
  return (
    <div className="flex h-screen flex-col overflow-hidden bg-[#676767] font-['Open_Sans',sans-serif] text-[11px] text-black">
      <Header />
      <CommandWindow />
      <Toolbars />
      <main className="flex min-h-0 flex-1">
        <div className="flex min-w-0 flex-1 flex-col border-l-[3px] border-t-2 border-[#a0a0a0] border-l-[#e4e4e4]">
          <div className="flex min-h-0 flex-1 border-l-2 border-[#777]">
            <Canvas />
            <div className="flex w-[18px] shrink-0 flex-col items-center bg-[#efefef]">
              <Chevron d={UP} className="shrink-0" />
              <div className="h-[17px] w-[15px] bg-[#cdcdcd]" />
              <Chevron d={DOWN} className="mt-auto shrink-0" />
            </div>
          </div>
          <div className="flex flex-col border-b-2 border-l-2 border-[#777] border-b-white">
            <LayoutTabs />
          </div>
        </div>
        <Properties />
      </main>
      <StatusBar />
    </div>
  );
}
